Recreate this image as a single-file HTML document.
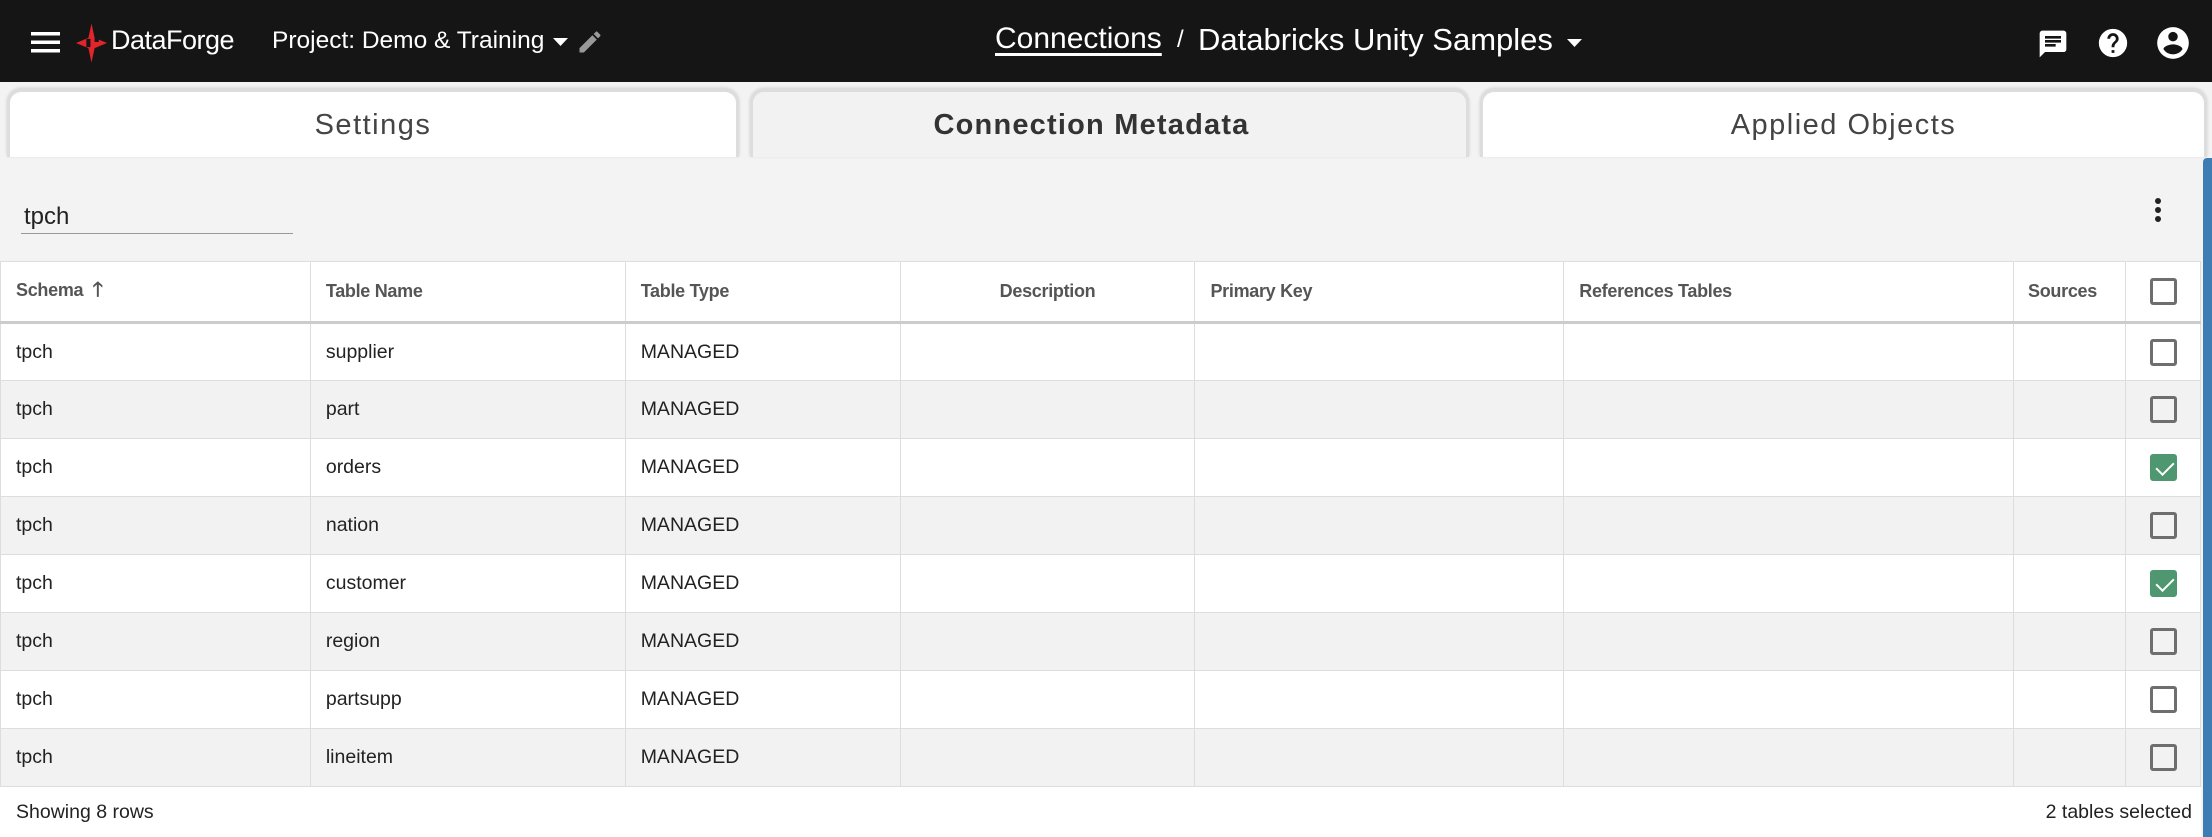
<!DOCTYPE html>
<html><head><meta charset="utf-8"><style>
*{box-sizing:border-box;margin:0;padding:0}
body{width:2212px;height:837px;overflow:hidden;background:#f3f3f3;font-family:"Liberation Sans",Arial,sans-serif;position:relative}
.hdr{position:absolute;left:0;top:0;width:2212px;height:82px;background:#151515;color:#fff}
.t{position:absolute;white-space:nowrap}
.tab{position:absolute;top:89px;height:68px;background:#fff;border:3px solid #ddd;border-bottom:none;border-radius:14px 14px 0 0;font-size:29px;letter-spacing:1.5px;color:#444;text-align:center;line-height:66px;box-shadow:0 -1px 3px rgba(0,0,0,.15)}
table{position:absolute;left:0;top:261px;width:2201px;border-collapse:collapse;background:#fff;font-size:19.5px;color:#222}
td,th{border:1px solid #ddd;height:58px;padding:0 15px;text-align:left;font-weight:normal}
th{height:61px;font-size:18px;color:#555;font-weight:bold;letter-spacing:-0.3px;border-bottom:3px solid #ccc}
tr.g td{background:#f2f2f2}
.cb{display:inline-block;width:27px;height:27px;border:3px solid #6e6e6e;border-radius:3px;vertical-align:middle;position:relative}
.cb.on{background:#4e9770;border-color:#4e9770}
.cb.on:after{content:"";position:absolute;left:7px;top:1px;width:8px;height:15px;border:solid #fff;border-width:0 2.5px 2.5px 0;transform:rotate(45deg)}
td:last-child,th:last-child{text-align:center;padding:0}
</style></head><body>
<div class="hdr">
 <svg class="t" style="left:31px;top:32px" width="29" height="21"><rect y="0" width="29" height="3.5" fill="#fff"/><rect y="8.5" width="29" height="3.5" fill="#fff"/><rect y="17" width="29" height="3.5" fill="#fff"/></svg>
 <svg class="t" style="left:76px;top:23px" width="31" height="40" viewBox="0 0 30 38"><path d="M15 0 L18 14 L30 19 L18 24 L15 38 L12 24 L0 19 L12 14Z" fill="#e0252b"/><path d="M18 14 h4 v4 h-4z M14 15 h-4 v8 h4" fill="#151515"/></svg>
 <div class="t" style="left:111px;top:25px;font-size:27px;letter-spacing:-0.5px">DataForge</div>
 <div class="t" style="left:272px;top:27px;font-size:24.5px">Project: Demo &amp; Training</div>
 <svg class="t" style="left:553px;top:38px" width="16" height="9"><path d="M0 0h15l-7.5 8z" fill="#fff"/></svg>
 <svg class="t" style="left:576px;top:28px" width="28" height="28" viewBox="0 0 24 24"><path d="M3 17.25V21h3.75L17.81 9.94l-3.75-3.75L3 17.25zM20.71 7.04a1 1 0 0 0 0-1.41l-2.34-2.34a1 1 0 0 0-1.41 0l-1.83 1.83 3.75 3.75 1.83-1.83z" fill="#999"/></svg>
 <div class="t" style="left:995px;top:22px;font-size:30px;text-decoration:underline;text-underline-offset:5px">Connections</div>
 <div class="t" style="left:1177px;top:26px;font-size:24px">/</div>
 <div class="t" style="left:1198px;top:22px;font-size:31px">Databricks Unity Samples</div>
 <svg class="t" style="left:1567px;top:39px" width="16" height="9"><path d="M0 0h15l-7.5 8z" fill="#fff"/></svg>
 <svg class="t" style="left:2037px;top:28px" width="32" height="32" viewBox="0 0 24 24"><path d="M20 2H4a2 2 0 0 0-2 2v18l4-4h14a2 2 0 0 0 2-2V4a2 2 0 0 0-2-2zM6 9h12v2H6zm8 5H6v-2h8zm4-6H6V6h12z" fill="#fff"/></svg>
 <svg class="t" style="left:2096px;top:26px" width="34" height="34" viewBox="0 0 24 24"><path d="M12 2a10 10 0 1 0 0 20 10 10 0 0 0 0-20zm1 17h-2v-2h2zm2.07-7.75-.9.92C13.450 12.9 13 13.5 13 15h-2v-.5c0-1.1.45-2.1 1.17-2.830l1.24-1.26A2 2 0 1 0 10 9H8a4 4 0 1 1 8 0c0 .88-.36 1.68-.93 2.25z" fill="#fff"/></svg>
 <svg class="t" style="left:2154px;top:24px" width="38" height="38" viewBox="0 0 24 24"><path d="M12 2a10 10 0 1 0 0 20 10 10 0 0 0 0-20zm0 3a3 3 0 1 1 0 6 3 3 0 0 1 0-6zm0 14.2a7.2 7.2 0 0 1-6-3.22c.03-1.99 4-3.08 6-3.08s5.97 1.09 6 3.08a7.2 7.2 0 0 1-6 3.22z" fill="#fff"/></svg>
</div>
<div class="tab" style="left:7px;width:732px">Settings</div>
<div class="tab" style="left:750px;width:719px;background:#f2f2f2;font-weight:bold;color:#333;letter-spacing:1.2px;padding-right:36px">Connection Metadata</div>
<div class="tab" style="left:1480px;width:727px">Applied Objects</div>
<div class="t" style="left:24px;top:203px;font-size:24px;color:#222">tpch</div>
<div class="t" style="left:21px;top:233px;width:272px;height:1px;background:#999"></div>
<svg class="t" style="left:2152px;top:197px" width="12" height="28"><circle cx="6" cy="4" r="3" fill="#222"/><circle cx="6" cy="13" r="3" fill="#222"/><circle cx="6" cy="22" r="3" fill="#222"/></svg>
<table>
<colgroup><col style="width:310px"><col style="width:315px"><col style="width:275px"><col style="width:295px"><col style="width:369px"><col style="width:450px"><col style="width:112px"><col style="width:75px"></colgroup>
<tr><th>Schema &nbsp;<span style="font-size:20px">🡑</span></th><th>Table Name</th><th>Table Type</th><th style="text-align:center">Description</th><th>Primary Key</th><th>References Tables</th><th style="text-align:left;padding-left:14px">Sources</th><th><span class="cb"></span></th></tr>
<tr><td>tpch</td><td>supplier</td><td>MANAGED</td><td></td><td></td><td></td><td></td><td><span class="cb"></span></td></tr>
<tr class="g"><td>tpch</td><td>part</td><td>MANAGED</td><td></td><td></td><td></td><td></td><td><span class="cb"></span></td></tr>
<tr><td>tpch</td><td>orders</td><td>MANAGED</td><td></td><td></td><td></td><td></td><td><span class="cb on"></span></td></tr>
<tr class="g"><td>tpch</td><td>nation</td><td>MANAGED</td><td></td><td></td><td></td><td></td><td><span class="cb"></span></td></tr>
<tr><td>tpch</td><td>customer</td><td>MANAGED</td><td></td><td></td><td></td><td></td><td><span class="cb on"></span></td></tr>
<tr class="g"><td>tpch</td><td>region</td><td>MANAGED</td><td></td><td></td><td></td><td></td><td><span class="cb"></span></td></tr>
<tr><td>tpch</td><td>partsupp</td><td>MANAGED</td><td></td><td></td><td></td><td></td><td><span class="cb"></span></td></tr>
<tr class="g"><td>tpch</td><td>lineitem</td><td>MANAGED</td><td></td><td></td><td></td><td></td><td><span class="cb"></span></td></tr>
</table>
<div class="t" style="left:0;top:787px;width:2201px;height:50px;background:#fff"></div>
<div class="t" style="left:16px;top:801px;font-size:19.5px;color:#222">Showing 8 rows</div>
<div class="t" style="right:20px;top:801px;font-size:19.5px;color:#222">2 tables selected</div>
<div class="t" style="left:2203px;top:158px;width:9px;height:679px;background:#3d7db3;border-radius:4px 0 0 0"></div>
</body></html>
